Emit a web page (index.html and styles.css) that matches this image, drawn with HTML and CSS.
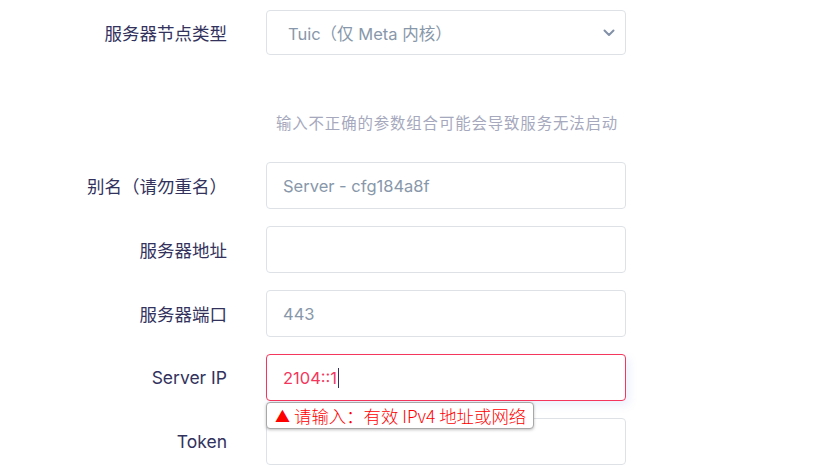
FILE: index.html
```html
<!DOCTYPE html>
<html lang="zh-CN">
<head>
<meta charset="utf-8">
<title>Tuic</title>
<link rel="stylesheet" href="styles.css">
</head>
<body>
<div class="form">
  <div class="row row-select">
    <label class="label">服务器节点类型</label>
    <div class="field">
      <div class="select">
        <span>Tuic（仅 Meta 内核）</span>
        <svg class="chev" width="12" height="8" viewBox="0 0 12 8"><path d="M1.5 1.5 L6 6 L10.5 1.5" fill="none" stroke="#8391a7" stroke-width="2" stroke-linecap="round" stroke-linejoin="round"/></svg>
      </div>
    </div>
  </div>
  <div class="hint-row">
    <div></div>
    <div class="hint">输入不正确的参数组合可能会导致服务无法启动</div>
  </div>
  <div class="row">
    <label class="label">别名（请勿重名）</label>
    <div class="field"><div class="input"><span class="muted">Server - cfg184a8f</span></div></div>
  </div>
  <div class="row">
    <label class="label">服务器地址</label>
    <div class="field"><div class="input"></div></div>
  </div>
  <div class="row">
    <label class="label">服务器端口</label>
    <div class="field"><div class="input"><span class="muted">443</span></div></div>
  </div>
  <div class="row">
    <label class="label">Server IP</label>
    <div class="field">
      <div class="input invalid"><span class="bad">2104::1</span><span class="caret"></span></div>
      <div class="tip"><span class="tri">▲</span> 请输入：有效 IPv4 地址或网络</div>
    </div>
  </div>
  <div class="row">
    <label class="label">Token</label>
    <div class="field"><div class="input"></div></div>
  </div>
</div>
</body>
</html>
```

FILE: styles.css
```css
html, body {
  margin: 0;
  padding: 0;
  background: #ffffff;
}
body {
  font-family: "Inter", "Noto Sans CJK SC", sans-serif;
  color: #32325d;
  width: 831px;
  height: 476px;
  overflow: hidden;
}
.form {
  padding-top: 10px;
  display: flex;
  flex-direction: column;
}
.row {
  display: grid;
  grid-template-columns: 227px 360px;
  column-gap: 39px;
  align-items: center;
  margin-bottom: 17px;
}
.row-select {
  margin-bottom: 0;
}
.label {
  text-align: right;
  font-size: 17.5px;
  color: #32325d;
  white-space: nowrap;
}
.field {
  position: relative;
}
.select, .input {
  box-sizing: border-box;
  height: 47px;
  border: 1px solid #dee2e6;
  border-radius: 4px;
  background: #fff;
  display: flex;
  align-items: center;
  padding: 0 16px;
  font-size: 16.5px;
}
.select {
  height: 45px;
  padding-left: 21px;
  padding-right: 10px;
  justify-content: space-between;
  color: #8898aa;
}
.chev {
  display: block;
}
.hint-row {
  display: grid;
  grid-template-columns: 227px 360px;
  column-gap: 39px;
  padding: 60px 0 29px;
}
.hint {
  padding-left: 10px;
  font-size: 15.4px;
  letter-spacing: 0.9px;
  color: #a6a9bd;
  line-height: 18px;
  white-space: nowrap;
}
.muted {
  color: #8898aa;
}
.invalid {
  border-color: #f5365c;
  box-shadow: 3px 4px 10px rgba(94, 114, 228, 0.12);
}
.bad {
  color: #f5365c;
}
.caret {
  display: inline-block;
  width: 1px;
  height: 20px;
  background: #32325d;
  margin-left: 1px;
}
.tip {
  position: absolute;
  left: 0;
  top: 48px;
  z-index: 2;
  box-sizing: border-box;
  height: 27px;
  padding: 0 7px 0 8px;
  display: flex;
  align-items: center;
  background: #fff;
  border: 1px solid #a8a8a8;
  border-radius: 4px;
  box-shadow: 0 1px 3px rgba(0, 0, 0, 0.25);
  color: #ff0000;
  font-family: "Noto Sans CJK SC", "Liberation Sans", sans-serif;
  font-size: 17.4px;
  font-weight: 300;
  white-space: nowrap;
}
.tri {
  font-size: 15px;
  margin-right: 4px;
}
```
